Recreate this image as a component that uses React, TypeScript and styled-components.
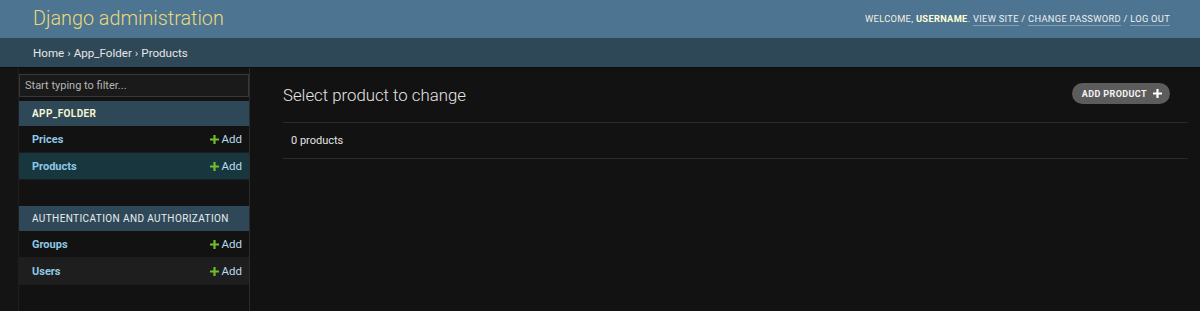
import React from "react";
import styled, { createGlobalStyle } from "styled-components";

const Global = createGlobalStyle`
  html, body { margin: 0; padding: 0; background: #121212; }
  body { font-family: Roboto, "Noto Sans", "Liberation Sans", sans-serif; color: #eeeeee; }
  * { box-sizing: border-box; }
`;

const Page = styled.div`
  width: 1200px;
  height: 311px;
  overflow: hidden;
  background: #121212;
  display: flex;
  flex-direction: column;
`;

const Header = styled.header`
  height: 38px;
  flex: 0 0 38px;
  background: #4d7490;
  display: flex;
  align-items: center;
  justify-content: space-between;
  padding: 0 30px 0 33px;
`;

const Branding = styled.h1`
  margin: 0;
  font-size: 19.8px;
  font-weight: 300;
  color: #e9d97a;
  position: relative;
  top: -1px;
`;

const UserTools = styled.div`
  font-size: 9.3px;
  letter-spacing: 0.3px;
  text-transform: uppercase;
  color: #f2f2e0;
  white-space: nowrap;
  position: relative;
  top: -1px;
`;

const UserName = styled.strong`
  font-weight: 700;
  color: #ffffd8;
`;

const ToolLink = styled.a`
  color: #eef1f3;
  text-decoration: none;
  border-bottom: 1px solid rgba(255, 255, 255, 0.3);
  padding-bottom: 1px;
`;

const Crumbs = styled.nav`
  height: 30px;
  flex: 0 0 30px;
  background: #2e4858;
  display: flex;
  align-items: center;
  padding: 0 33px;
  font-size: 11.6px;
  color: #e6e6e6;
  border-bottom: 1px solid #0d0d0d;
`;

const Sep = styled.span`
  margin: 0 3px;
  color: #d8dde0;
`;

const Main = styled.div`
  flex: 1;
  display: flex;
  min-height: 0;
`;

const Toggle = styled.div`
  width: 19px;
  flex: 0 0 19px;
  border-right: 1px solid #1f1f1f;
  background: #141414;
`;

const Sidebar = styled.nav`
  width: 231px;
  flex: 0 0 231px;
  border-right: 1px solid #2c2c2c;
  padding-top: 6px;
  background: #121212;
`;

const Filter = styled.input`
  display: block;
  width: 230px;
  height: 23px;
  margin: 0 0 4px 0;
  padding: 0 5px;
  background: #1a1a1a;
  border: 1px solid #383838;
  color: #eee;
  font-family: inherit;
  font-size: 11px;
  outline: none;
  &::placeholder { color: #b5b5b5; }
`;

const Module = styled.div`
  margin-bottom: 26px;
`;

const Caption = styled.div<{ $current?: boolean }>`
  height: 25px;
  display: flex;
  align-items: center;
  padding: 0 13px;
  background: #2e4858;
  font-size: 10px;
  letter-spacing: 0.4px;
  white-space: nowrap;
  text-transform: uppercase;
  font-weight: ${(p) => (p.$current ? 700 : 400)};
  color: ${(p) => (p.$current ? "#f7f5cf" : "#e8ecef")};
`;

const Row = styled.div<{ $bg?: string }>`
  height: 27px;
  display: flex;
  align-items: center;
  justify-content: space-between;
  padding: 0 7px 0 13px;
  background: ${(p) => p.$bg || "#121212"};
  border-bottom: 1px solid #1c1c1c;
`;

const ModelLink = styled.a`
  font-size: 11px;
  font-weight: 700;
  color: #8ec8e6;
  text-decoration: none;
`;

const AddLink = styled.a`
  display: flex;
  align-items: center;
  gap: 3px;
  font-size: 11.5px;
  color: #b9dced;
  text-decoration: none;
`;

const Content = styled.div`
  flex: 1;
  padding: 14px 12px 0 33px;
`;

const TitleBar = styled.div`
  display: flex;
  align-items: flex-start;
  justify-content: space-between;
  height: 40px;
`;

const Title = styled.h1`
  margin: 0;
  padding-top: 3px;
  font-size: 16.8px;
  font-weight: 300;
  color: #e4e4e4;
`;

const AddButton = styled.a`
  margin: 1px 18px 0 0;
  height: 21px;
  display: flex;
  align-items: center;
  gap: 6px;
  padding: 0 8px 0 10px;
  border-radius: 11px;
  background: #5c5c5c;
  color: #f4f4f4;
  font-size: 9px;
  font-weight: 700;
  letter-spacing: 0.4px;
  text-transform: uppercase;
  text-decoration: none;
`;

const Results = styled.div`
  border-top: 1px solid #2a2a2a;
  border-bottom: 1px solid #2a2a2a;
  height: 37px;
  display: flex;
  align-items: center;
  padding: 0 8px;
  font-size: 11px;
  color: #e2e2e2;
`;

const Plus = ({ color, size = 9 }: { color: string; size?: number }) => (
  <svg width={size} height={size} viewBox="0 0 10 10">
    <path d="M3.8 0h2.4v3.8H10v2.4H6.2V10H3.8V6.2H0V3.8h3.8z" fill={color} />
  </svg>
);

export default function App() {
  return (
    <Page>
      <Global />
      <Header>
        <Branding>Django administration</Branding>
        <UserTools>
          Welcome, <UserName>username</UserName>.{" "}
          <ToolLink href="#">View site</ToolLink> /{" "}
          <ToolLink href="#">Change password</ToolLink> /{" "}
          <ToolLink href="#">Log out</ToolLink>
        </UserTools>
      </Header>
      <Crumbs>
        Home<Sep>›</Sep>App_Folder<Sep>›</Sep>Products
      </Crumbs>
      <Main>
        <Toggle />
        <Sidebar>
          <Filter placeholder="Start typing to filter..." />
          <Module>
            <Caption $current>App_Folder</Caption>
            <Row>
              <ModelLink href="#">Prices</ModelLink>
              <AddLink href="#"><Plus color="#70bf2b" />Add</AddLink>
            </Row>
            <Row $bg="#18363d">
              <ModelLink href="#">Products</ModelLink>
              <AddLink href="#"><Plus color="#70bf2b" />Add</AddLink>
            </Row>
          </Module>
          <Module>
            <Caption>Authentication and Authorization</Caption>
            <Row>
              <ModelLink href="#">Groups</ModelLink>
              <AddLink href="#"><Plus color="#70bf2b" />Add</AddLink>
            </Row>
            <Row $bg="#1e1e1e">
              <ModelLink href="#">Users</ModelLink>
              <AddLink href="#"><Plus color="#70bf2b" />Add</AddLink>
            </Row>
          </Module>
        </Sidebar>
        <Content>
          <TitleBar>
            <Title>Select product to change</Title>
            <AddButton href="#">Add product<Plus color="#ffffff" size={9} /></AddButton>
          </TitleBar>
          <Results>0 products</Results>
        </Content>
      </Main>
    </Page>
  );
}
